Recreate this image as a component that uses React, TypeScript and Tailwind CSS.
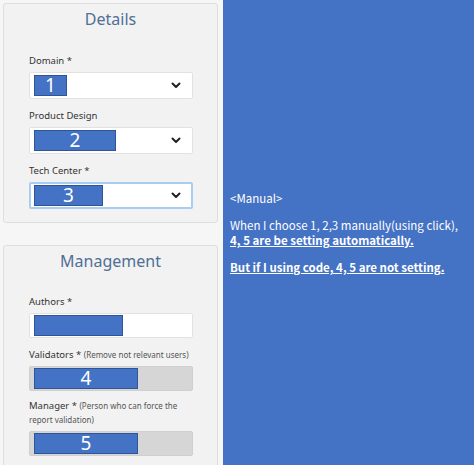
import React from 'react';

const Chevron = () => (
  <svg width="10" height="7" viewBox="0 0 10 7" className="shrink-0">
    <polyline points="1.5,1.5 5,5 8.5,1.5" fill="none" stroke="#222" strokeWidth="2" strokeLinecap="round" strokeLinejoin="round" />
  </svg>
);

const Bar = ({ w, label }: { w: string; label?: string }) => (
  <div className={`${w} h-[21px] bg-[#4472c4] border border-[#2f5597] flex items-center justify-center text-white text-[19px] leading-none`}>
    {label}
  </div>
);

const Select = ({ w, label, focused }: { w: string; label: string; focused?: boolean }) => (
  <div
    className={`h-[27px] w-[164px] bg-white rounded-[2px] flex items-center justify-between ${
      focused ? 'border-2 border-[#a9cdef] pl-[3px] pr-[10px]' : 'border border-[#e2e2e2] pl-[4px] pr-[11px]'
    }`}
  >
    <Bar w={w} label={label} />
    <Chevron />
  </div>
);

const Label = ({ children, tight }: { children: React.ReactNode; tight?: boolean }) => (
  <div className={`text-[9.5px] text-[#333] mb-[4px] ${tight ? 'leading-[14px]' : 'leading-[15px]'}`}>{children}</div>
);

const Hint = ({ children }: { children: React.ReactNode }) => (
  <span className="text-[8px] text-[#555]">{children}</span>
);

export default function App() {
  return (
    <div className="w-[474px] h-[465px] flex overflow-hidden" style={{ fontFamily: '"Noto Sans", sans-serif' }}>
      <div className="w-[223px] shrink-0 bg-[#f6f6f6] pt-[3px] pl-[3px]">
        <div className="w-[215px] h-[220px] bg-[#f2f2f2] border border-[#dedede] rounded-[3px] px-[25px] pt-[4px]">
          <div className="text-center text-[16px] leading-[22px] text-[#4f6f96] mb-[23px]">Details</div>
          <Label>Domain *</Label>
          <Select w="w-[33px]" label="1" />
          <div className="h-[9px]" />
          <Label>Product Design</Label>
          <Select w="w-[82px]" label="2" />
          <div className="h-[9px]" />
          <Label>Tech Center *</Label>
          <Select w="w-[69px]" label="3" focused />
        </div>

        <div className="mt-[22px] w-[215px] h-[240px] bg-[#f2f2f2] border border-[#dedede] rounded-[3px] px-[25px] pt-[4px]">
          <div className="text-center text-[16px] leading-[22px] text-[#4f6f96] mb-[22px]">Management</div>
          <Label>Authors *</Label>
          <div className="h-[25px] w-[164px] bg-white border border-[#e2e2e2] rounded-[2px] flex items-center pl-[4px]">
            <Bar w="w-[89px]" />
          </div>
          <div className="h-[9px]" />
          <Label>
            Validators * <Hint>(Remove not relevant users)</Hint>
          </Label>
          <div className="h-[25px] w-[164px] bg-[#d6d6d6] border border-[#cfcfcf] rounded-[2px] flex items-center pl-[4px]">
            <Bar w="w-[104px]" label="4" />
          </div>
          <div className="h-[8px]" />
          <Label tight>
            Manager * <Hint>(Person who can force the report validation)</Hint>
          </Label>
          <div className="h-[25px] w-[164px] bg-[#d6d6d6] border border-[#cfcfcf] rounded-[2px] flex items-center pl-[4px]">
            <Bar w="w-[104px]" label="5" />
          </div>
        </div>
      </div>

      <div
        className="flex-1 bg-[#4472c4] text-white text-[11.5px] leading-[15px] pl-[7px] pt-[191px]"
        style={{ fontFamily: '"Noto Sans CJK KR", "Noto Sans", sans-serif' }}
      >
        <div>&lt;Manual&gt;</div>
        <div className="h-[12px]" />
        <div>When I choose 1, 2,3 manually(using click),</div>
        <div className="font-bold underline">4, 5 are be setting automatically.</div>
        <div className="h-[12px]" />
        <div className="font-bold underline">But if I using code, 4, 5 are not setting.</div>
      </div>
    </div>
  );
}
